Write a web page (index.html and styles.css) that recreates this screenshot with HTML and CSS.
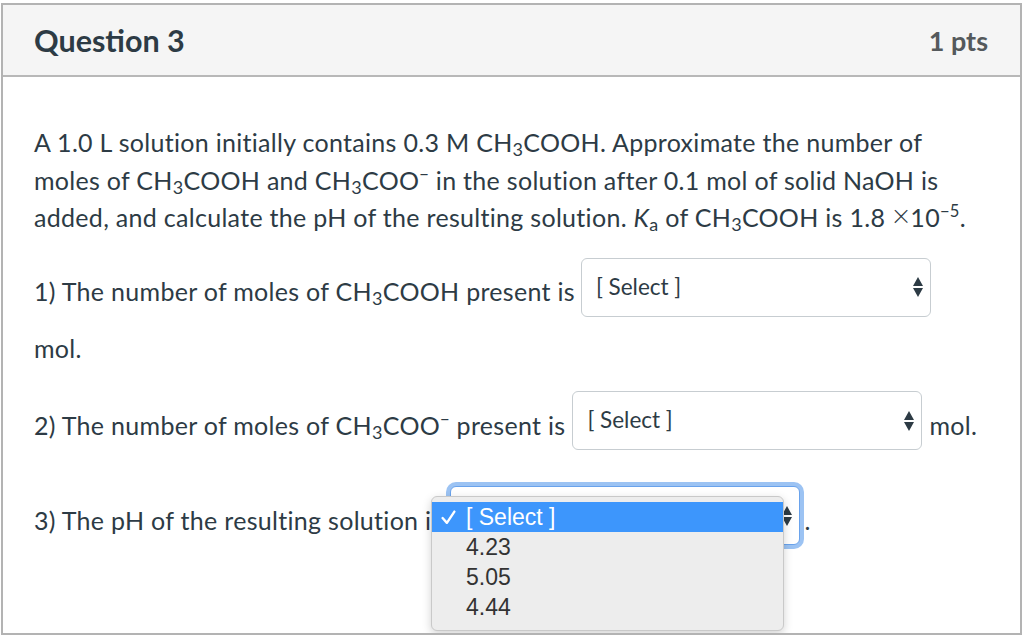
FILE: index.html
```html
<!DOCTYPE html>
<html>
<head>
<meta charset="utf-8">
<link rel="stylesheet" href="styles.css">
</head>
<body>
<div class="card">
  <div class="header">
    <h2 class="title">Question 3</h2>
    <span class="pts">1 pts</span>
  </div>
  <div class="content">
    <p class="intro">A 1.0 L solution initially contains 0.3 M CH<span class="sub">3</span>COOH. Approximate the number of moles of CH<span class="sub">3</span>COOH and CH<span class="sub">3</span>COO<span class="sup">&minus;</span> in the solution after 0.1 mol of solid NaOH is added, and calculate the pH of the resulting solution. <i>K</i><span class="sub">a</span> of CH<span class="sub">3</span>COOH is 1.8 <span class="times">&times;</span>10<span class="sup">&minus;5</span>.</p>

    <div class="row r1">
      <span class="txt">1) The number of moles of CH<span class="sub">3</span>COOH present is</span>
      <span class="sel"><span class="sel-text">[ Select ]</span><span class="arrows"><svg width="10" height="20" viewBox="0 0 10 20"><path d="M5 0 L10 9 L0 9 Z M0 11 L10 11 L5 20 Z" fill="#2d3b45"/></svg></span></span>
    </div>
    <p class="mol">mol.</p>

    <div class="row r2">
      <span class="txt">2) The number of moles of CH<span class="sub">3</span>COO<span class="sup">&minus;</span> present is</span>
      <span class="sel"><span class="sel-text">[ Select ]</span><span class="arrows"><svg width="10" height="20" viewBox="0 0 10 20"><path d="M5 0 L10 9 L0 9 Z M0 11 L10 11 L5 20 Z" fill="#2d3b45"/></svg></span></span>
      <span class="txt">mol.</span>
    </div>

    <div class="row r3">
      <span class="txt">3) The pH of the resulting solution is</span>
      <span class="sel focused"><span class="sel-text"></span><span class="arrows"><svg width="10" height="20" viewBox="0 0 10 20"><path d="M5 0 L10 9 L0 9 Z M0 11 L10 11 L5 20 Z" fill="#2d3b45"/></svg></span></span>
      <span class="txt dot">.</span>
    </div>
  </div>

  <ul class="menu">
    <li class="opt active"><svg class="check" width="15" height="15" viewBox="0 0 14 14"><path d="M1.5 7.5 L5.5 12 L12.5 1.5" fill="none" stroke="#fff" stroke-width="2.2" stroke-linecap="round" stroke-linejoin="round"/></svg>[ Select ]</li>
    <li class="opt">4.23</li>
    <li class="opt">5.05</li>
    <li class="opt">4.44</li>
  </ul>
</div>
</body>
</html>
```

FILE: styles.css
```css
* { box-sizing: border-box; }
html, body { margin: 0; padding: 0; background: #fff; }
body { font-family: Lato, "Noto Sans", sans-serif; color: #2d3b45; }

.card {
  position: relative;
  margin: 3px 2px 0 1px;
  height: 632px;
  border: 2px solid #b3b3b3;
  overflow: hidden;
}

.header {
  height: 72px;
  background: #f5f5f5;
  border-bottom: 2px solid #b8b8b8;
  display: flex;
  align-items: center;
  justify-content: space-between;
  padding: 0 32px 0 31px;
}
.title { margin: 0; font-size: 30.5px; font-weight: 700; color: #2d3b45; }
.pts { font-size: 27px; font-weight: 700; color: #54595c; }

.content { padding: 47px 30px 0 31px; font-size: 25px; letter-spacing: 0.3px; }
.intro { margin: 0; line-height: 37.5px; }

.sub { font-size: 0.72em; vertical-align: -0.22em; line-height: 0; }
.sup { font-size: 0.66em; vertical-align: 0.6em; line-height: 0; }
.times { font-size: 1.25em; line-height: 0; font-weight: 300; }

.row { display: flex; align-items: center; gap: 6px; line-height: 37.5px; }
.txt { margin-top: 10px; }
.r1 { margin-top: 21px; }
.mol { margin: 13px 0 0; line-height: 37.5px; }
.r2 { margin-top: 24px; gap: 7px; }
.r3 { margin-top: 36px; gap: 7px; }

.sel {
  display: flex;
  align-items: center;
  justify-content: space-between;
  width: 350px;
  height: 59px;
  border: 1px solid #c7cdd1;
  border-radius: 6px;
  background: #fff;
  padding: 0 7px 0 14px;
  font-size: 22.5px;
  letter-spacing: 0;
}
.sel-text { margin-top: -1px; }
.arrows { display: flex; }
.focused {
  border-color: #6aa3ec;
  box-shadow: 0 0 0 4px #9cc3f3;
}
.dot { margin-left: -2px; }

.menu {
  position: absolute;
  left: 428px;
  top: 491px;
  width: 353px;
  height: 135px;
  margin: 0;
  padding: 5px 0 0;
  list-style: none;
  background: #ededed;
  border: 1px solid #c9c9c9;
  border-radius: 6px;
  box-shadow: 0 3px 10px rgba(0,0,0,0.18);
  font-family: "Liberation Sans", Arial, sans-serif;
  font-size: 23px;
  color: #333;
}
.opt { height: 30px; line-height: 30px; padding-left: 34px; position: relative; }
.opt.active { background: #3d96fc; color: #fff; }
.check { position: absolute; left: 9px; top: 8px; }
```
